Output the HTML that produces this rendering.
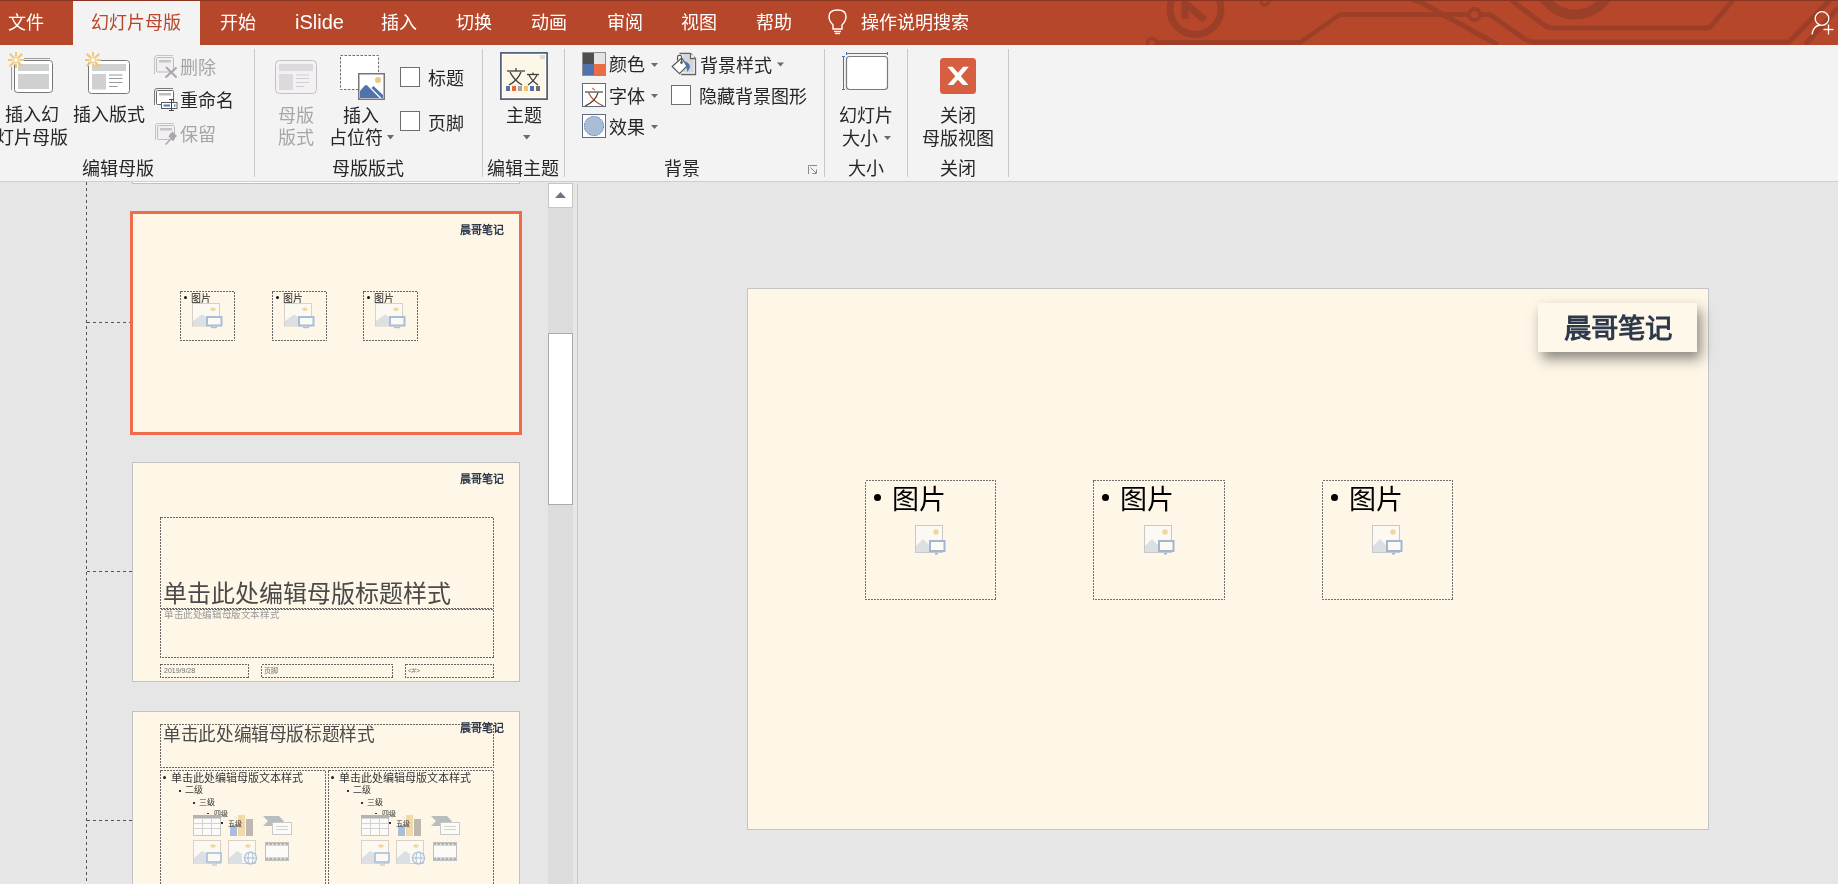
<!DOCTYPE html>
<html lang="zh-CN">
<head>
<meta charset="utf-8">
<style>
*{margin:0;padding:0;box-sizing:border-box}
html,body{width:1838px;height:884px;overflow:hidden}
body{position:relative;background:#E6E6E6;font-family:"Liberation Sans",sans-serif;color:#262626}
.a{position:absolute}
.t{position:absolute;white-space:nowrap;line-height:1;font-size:18px;will-change:transform}
.w{color:#fff}
.dis{color:#A6A6A6}
svg{position:absolute;overflow:visible}
</style>
</head>
<body>
<!-- TAB BAR -->
<div class="a" style="left:0;top:0;width:1838px;height:45px;background:#B7472A"></div>
<div class="a" style="left:0;top:0;width:1838px;height:1px;background:#8A3521"></div>
<svg style="left:0;top:0" width="1838" height="45" viewBox="0 0 1838 45">
 <defs><clipPath id="tb"><rect x="0" y="1" width="1838" height="44"/></clipPath></defs>
 <g clip-path="url(#tb)" fill="none" stroke="#9B3F28">
  <circle cx="1195.5" cy="9" r="25.5" stroke-width="7"/>
  <path d="M1185,19 L1185,0 M1185,3 L1205,20" stroke-width="7"/>
  <circle cx="1265" cy="1" r="4" stroke-width="3.5"/>
  <circle cx="1152" cy="43" r="4.5" stroke-width="3.5"/>
  <path d="M1157,42.5 L1300,42.5 L1340,14.5 L1468,14.5" stroke-width="4.5"/>
  <circle cx="1474.5" cy="14.5" r="5.5" stroke-width="4"/>
  <path d="M1481,14.5 L1488,14.5 Q1490,14.5 1492,16 L1526,40 Q1529,42 1533,42 L1789,42 L1830,0" stroke-width="5"/>
  <path d="M1412,0 Q1418,0 1424,4 L1498,45" stroke-width="5"/>
  <path d="M1511,0 L1544,25 Q1548,28 1553,28 L1706,28 Q1710,28 1713,24 L1733,0" stroke-width="5"/>
  <circle cx="1575" cy="-23" r="37.5" stroke-width="10"/>
  <path d="M1805,45 L1838,8" stroke-width="5"/>
 </g>
 <!-- bulb -->
 <g fill="none" stroke="#fff" stroke-width="1.4">
  <path d="M833,29 L833,25 Q829,21 829,16.5 Q829,10 837.5,10 Q846,10 846,16.5 Q846,21 842,25 L842,29 Z"/>
  <line x1="834" y1="31.5" x2="841" y2="31.5"/>
  <line x1="835" y1="33.5" x2="840" y2="33.5"/>
 </g>
 <!-- user add -->
 <g fill="none" stroke="#fff" stroke-width="1.3">
  <circle cx="1822" cy="18.5" r="6.8"/>
  <path d="M1812,34.5 Q1813,26 1820,25"/>
  <line x1="1823.5" y1="29.5" x2="1833.5" y2="29.5"/>
  <line x1="1828.5" y1="24.5" x2="1828.5" y2="34.5"/>
 </g>
</svg>
<div class="a" style="left:73px;top:1px;width:127px;height:44px;background:#F3F3F3"></div>

<div class="t w" style="left:8px;top:14px">文件</div>
<div class="t" style="left:91px;top:14px;color:#B7472A">幻灯片母版</div>
<div class="t w" style="left:220px;top:14px">开始</div>
<div class="t w" style="left:295px;top:12px;font-size:20px">iSlide</div>
<div class="t w" style="left:381px;top:14px">插入</div>
<div class="t w" style="left:456px;top:14px">切换</div>
<div class="t w" style="left:531px;top:14px">动画</div>
<div class="t w" style="left:607px;top:14px">审阅</div>
<div class="t w" style="left:681px;top:14px">视图</div>
<div class="t w" style="left:756px;top:14px">帮助</div>
<div class="t w" style="left:861px;top:14px">操作说明搜索</div>

<!-- RIBBON -->
<div class="a" style="left:0;top:45px;width:1838px;height:136px;background:#F3F3F3"></div>
<div class="a" style="left:0;top:181px;width:1838px;height:1px;background:#CDCFD1"></div>

<!-- ribbon icons -->
<svg style="left:0;top:0" width="1838" height="184" viewBox="0 0 1838 184">
 <!-- insert slide master -->
 <line x1="11.5" y1="67" x2="11.5" y2="90" stroke="#9C9C9C"/>
 <line x1="24" y1="58.5" x2="50" y2="58.5" stroke="#9C9C9C"/>
 <rect x="14.5" y="60.5" width="38" height="32" rx="3" fill="#fff" stroke="#767676"/>
 <rect x="18" y="64" width="31" height="7" fill="#CFD0D0"/>
 <rect x="18" y="74" width="31" height="15" fill="#CFD0D0"/>
 <g id="sun1">
  <circle cx="16" cy="60" r="5" fill="#F3F3F3"/>
  <g stroke="#F0C878" stroke-width="2" stroke-linecap="butt">
   <line x1="16" y1="52" x2="16" y2="56.5"/><line x1="16" y1="63.5" x2="16" y2="68"/>
   <line x1="8" y1="60" x2="12.5" y2="60"/><line x1="19.5" y1="60" x2="24" y2="60"/>
   <line x1="9.7" y1="53.7" x2="14" y2="58"/><line x1="18" y1="62" x2="22.3" y2="66.3"/>
   <line x1="22.3" y1="53.7" x2="18" y2="58"/><line x1="14" y1="62" x2="9.7" y2="66.3"/>
  </g>
  <circle cx="16" cy="60" r="2.4" fill="#fff" stroke="#F0C878" stroke-width="1"/>
 </g>
 <!-- insert layout -->
 <rect x="88.5" y="60.5" width="41" height="33" rx="3" fill="#fff" stroke="#767676"/>
 <rect x="92" y="64" width="34" height="7" fill="#CFD0D0"/>
 <rect x="92" y="74" width="14" height="15.5" fill="#CFD0D0"/>
 <g stroke="#9A9A9A"><line x1="109" y1="75" x2="122.5" y2="75"/><line x1="109" y1="78.5" x2="122.5" y2="78.5"/><line x1="109" y1="82.5" x2="122.5" y2="82.5"/><line x1="109" y1="86.5" x2="117.5" y2="86.5"/></g>
 <use href="#sun1" x="77" y="0"/>
 <!-- delete (disabled) -->
 <g>
  <path d="M154.5,74 L154.5,58 Q154.5,55.5 157,55.5 L173,55.5" fill="none" stroke="#C4C4C4"/>
  <rect x="156.5" y="57.5" width="17" height="14.5" rx="1" fill="#F3EEF3" stroke="#BDBDBD"/>
  <rect x="159" y="60" width="12" height="2.5" fill="#C6C6C6"/>
  <g stroke="#A8A8A8" stroke-width="2"><line x1="165.5" y1="77.5" x2="176.5" y2="67.5"/><line x1="166" y1="67" x2="176.5" y2="77.5"/></g>
 </g>
 <!-- rename -->
 <g>
  <path d="M154.5,105 L154.5,91 Q154.5,88.5 157,88.5 L173,88.5" fill="none" stroke="#7A7A7A"/>
  <rect x="156.5" y="90.5" width="17" height="14" rx="1" fill="#fff" stroke="#6A6A6A"/>
  <rect x="159" y="93" width="12" height="2.5" fill="#BDBDBD"/>
  <rect x="161.5" y="102.5" width="15.5" height="6" fill="#fff" stroke="#5A5A5A"/>
  <line x1="163.5" y1="105.5" x2="170" y2="105.5" stroke="#4A78BA" stroke-width="2"/>
  <rect x="174" y="104.5" width="1.5" height="2" fill="#4A78BA"/>
  <g stroke="#444"><line x1="171.5" y1="99.5" x2="171.5" y2="111"/><line x1="169" y1="99.5" x2="174" y2="99.5"/><line x1="169" y1="110.5" x2="174" y2="110.5"/></g>
 </g>
 <!-- preserve (disabled) -->
 <g>
  <path d="M155.5,140 L155.5,126 Q155.5,123.5 158,123.5 L174,123.5" fill="none" stroke="#C4C4C4"/>
  <rect x="157.5" y="125.5" width="17" height="14" rx="1" fill="#F3EEF3" stroke="#BDBDBD"/>
  <rect x="160" y="128" width="12" height="2.5" fill="#C6C6C6"/>
  <polygon points="168.5,136.5 173.5,141.5 174.5,138.5 177,136 172.5,131.5 170,134" fill="#A8A8A8"/>
  <line x1="165.5" y1="144.5" x2="170.5" y2="139.5" stroke="#A8A8A8" stroke-width="1.5"/>
 </g>
 <!-- master layout (disabled) -->
 <rect x="275.5" y="60.5" width="41" height="33" rx="4" fill="#F4F0F4" stroke="#C2C2C2"/>
 <rect x="279" y="64" width="34" height="7" fill="#DCDADC"/>
 <rect x="279" y="74" width="14" height="16" fill="#DCDADC"/>
 <g stroke="#CFCFCF"><line x1="296" y1="75" x2="309" y2="75"/><line x1="296" y1="78.5" x2="309" y2="78.5"/><line x1="296" y1="82.5" x2="309" y2="82.5"/><line x1="296" y1="86.5" x2="304" y2="86.5"/></g>
 <!-- insert placeholder -->
 <rect x="340.5" y="55.5" width="38" height="34" fill="#fff" stroke="#707070" stroke-dasharray="2.5 1.5"/>
 <rect x="358.75" y="73.75" width="25.5" height="25.5" fill="#fff" stroke="#777" stroke-width="1.5"/>
 <circle cx="378" cy="80" r="3" fill="#F0C57F"/>
 <polygon points="360,98 360,91 365,85.3 367,85.3 379.5,98" fill="#4F73AC"/>
 <polygon points="371.5,88 373.5,86 383,95 383,98 381.5,98" fill="#4F73AC"/>
 <polygon points="387,135 394,135 390.5,139.5" fill="#6A6A6A"/>
 <!-- checkboxes -->
 <rect x="400.5" y="67.5" width="19" height="19" fill="#fff" stroke="#6E6E6E"/>
 <rect x="400.5" y="111.5" width="19" height="19" fill="#fff" stroke="#6E6E6E"/>
 <rect x="671.5" y="85.5" width="19" height="19" fill="#fff" stroke="#6E6E6E"/>
 <!-- theme -->
 <rect x="500.9" y="52.9" width="46.2" height="46.2" fill="#fff" stroke="#56647A" stroke-width="1.8"/>
 <rect x="503" y="55" width="42" height="42" fill="#FDF7E8"/>
 <rect x="540" y="55" width="5" height="4" fill="#D9D9D9"/>
 <g fill="none" stroke="#404040" stroke-width="1.3">
  <line x1="507" y1="71" x2="525" y2="71"/><line x1="516" y1="68" x2="516" y2="71"/>
  <path d="M510,72 Q514,80 522,85"/><path d="M521,72 Q518,80 509,85"/>
  <line x1="527" y1="74.5" x2="539" y2="74.5"/><line x1="533" y1="72.5" x2="533" y2="74.5"/>
  <path d="M529,75 Q532,81 538,85"/><path d="M537,75 Q534,81 528,85"/>
 </g>
 <g><rect x="506" y="86" width="4" height="5" fill="#4E72B0"/><rect x="512" y="86" width="4" height="5" fill="#E8673E"/><rect x="518" y="86" width="4" height="5" fill="#A5A5A5"/><rect x="524" y="86" width="4" height="5" fill="#F0C46E"/><rect x="530" y="86" width="4" height="5" fill="#4E72B0"/><rect x="536" y="86" width="4" height="5" fill="#6E6E6E"/></g>
 <polygon points="523,135 530.5,135 526.75,139.5" fill="#6A6A6A"/>
 <!-- colors -->
 <rect x="583" y="53" width="11" height="11" fill="#4F4F4F"/>
 <rect x="594" y="53" width="11" height="11" fill="#E3E3E3"/>
 <rect x="583" y="64" width="11" height="11" fill="#4F73B0"/>
 <rect x="594" y="64" width="11" height="11" fill="#EB6D45"/>
 <rect x="582.5" y="52.5" width="23" height="23" fill="none" stroke="#8E8E8E"/>
 <!-- fonts -->
 <rect x="582.5" y="83.5" width="23" height="23" fill="#fff" stroke="#5F6B7C"/>
 <g fill="none" stroke-width="1.1">
  <line x1="585" y1="92" x2="603" y2="92" stroke="#333"/>
  <line x1="592.3" y1="88" x2="594.8" y2="90.2" stroke="#C8603E"/>
  <path d="M588.5,92.5 Q592,101 603.5,106" stroke="#A8502F"/>
  <path d="M598,92.5 Q596,101 585,106" stroke="#5A3A2A"/>
 </g>
 <!-- effects -->
 <rect x="582.5" y="114.5" width="23" height="23" fill="#fff" stroke="#5F6B7C"/>
 <circle cx="594" cy="126" r="9.6" fill="#A8BCD6" stroke="#5E82BE" stroke-dasharray="2 0.6"/>
 <!-- dropdown arrows -->
 <g fill="#6A6A6A">
  <polygon points="651,63 658,63 654.5,67"/>
  <polygon points="651,94 658,94 654.5,98"/>
  <polygon points="651,125 658,125 654.5,129"/>
  <polygon points="777,62.5 784,62.5 780.5,66.5"/>
  <polygon points="884,136 891,136 887.5,140"/>
 </g>
 <!-- background styles -->
 <path d="M679.5,53.5 L690.5,53.5 L695.5,58.5 L695.5,74.5 L681,74.5" fill="#fff" stroke="#646464" stroke-width="1.3"/>
 <rect x="683" y="55" width="10.8" height="17.6" fill="#D3D6DA"/>
 <path d="M690.5,53.5 L690.5,58.5 L695.5,58.5" fill="#fff" stroke="#646464" stroke-width="1.3"/>
 <path d="M672.2,66.5 L681.6,58 L687,66 L679.5,73.6 Z" fill="#fff" stroke="#5A5A5A" stroke-width="1.2"/>
 <path d="M677.5,60.5 L677.5,57 Q677.5,55.3 679.3,55.3 L680.2,55.3 Q681.6,55.3 681.6,57 L681.6,62" fill="none" stroke="#5A5A5A" stroke-width="1.2"/>
 <circle cx="681.5" cy="62.6" r="1.4" fill="#5A5A5A"/>
 <path d="M684.3,61 L687.5,62.5 L689.8,65 L689.8,68 L687.3,72 L686.3,66 Z" fill="#4A74B6"/>
 <!-- launcher -->
 <g fill="none" stroke="#8A8A8A"><path d="M808.5,174 L808.5,165.5 L817,165.5"/><line x1="810.5" y1="167.5" x2="816" y2="173"/><path d="M812.5,173.5 L816.5,173.5 L816.5,169.5"/></g>
 <!-- slide size -->
 <rect x="846.5" y="56.5" width="41" height="33" rx="3" fill="#fff" stroke="#7A7A7A" stroke-width="1.2"/>
 <g stroke="#4A74B6"><line x1="846" y1="53.5" x2="888" y2="53.5"/><line x1="846.5" y1="52" x2="846.5" y2="55"/><line x1="887.5" y1="52" x2="887.5" y2="55"/>
 <line x1="843.5" y1="56" x2="843.5" y2="90"/><line x1="842" y1="56.5" x2="845" y2="56.5"/><line x1="842" y1="89.5" x2="845" y2="89.5"/></g>
 <!-- close -->
 <rect x="940" y="58" width="36" height="36" rx="3.5" fill="#D55F40"/>
 <polygon points="947.4,66.8 952.6,66.8 957.9,72.7 963.2,66.8 968.8,66.8 960.9,76.2 968.5,85 962.9,85 957.9,79.8 953.2,85 947.6,85 955.3,76.2" fill="#fff"/>
</svg>

<!-- group labels -->
<div class="t" style="left:82px;top:160px">编辑母版</div>
<div class="t" style="left:332px;top:160px">母版版式</div>
<div class="t" style="left:487px;top:160px">编辑主题</div>
<div class="t" style="left:664px;top:160px">背景</div>
<div class="t" style="left:848px;top:160px">大小</div>
<div class="t" style="left:940px;top:160px">关闭</div>

<!-- separators -->
<div class="a" style="left:254px;top:49px;width:1px;height:128px;background:#C8C8C8"></div>
<div class="a" style="left:482px;top:49px;width:1px;height:128px;background:#C8C8C8"></div>
<div class="a" style="left:564px;top:49px;width:1px;height:128px;background:#C8C8C8"></div>
<div class="a" style="left:824px;top:49px;width:1px;height:128px;background:#C8C8C8"></div>
<div class="a" style="left:907px;top:49px;width:1px;height:128px;background:#C8C8C8"></div>
<div class="a" style="left:1008px;top:49px;width:1px;height:128px;background:#C8C8C8"></div>

<!-- group 1 texts -->
<div class="t" style="left:5px;top:106px">插入幻</div>
<div class="t" style="left:-4px;top:129px">灯片母版</div>
<div class="t" style="left:73px;top:106px">插入版式</div>
<div class="t dis" style="left:180px;top:59px">删除</div>
<div class="t" style="left:180px;top:92px">重命名</div>
<div class="t dis" style="left:180px;top:126px">保留</div>

<!-- group 2 texts -->
<div class="t dis" style="left:278px;top:107px">母版</div>
<div class="t dis" style="left:278px;top:129px">版式</div>
<div class="t" style="left:343px;top:107px">插入</div>
<div class="t" style="left:329px;top:129px">占位符</div>
<div class="t" style="left:428px;top:70px">标题</div>
<div class="t" style="left:428px;top:115px">页脚</div>

<!-- group 3 -->
<div class="t" style="left:506px;top:107px">主题</div>

<!-- group 4 -->
<div class="t" style="left:609px;top:56px">颜色</div>
<div class="t" style="left:609px;top:88px">字体</div>
<div class="t" style="left:609px;top:119px">效果</div>
<div class="t" style="left:700px;top:57px">背景样式</div>
<div class="t" style="left:699px;top:88px">隐藏背景图形</div>

<!-- group 5/6 -->
<div class="t" style="left:839px;top:107px">幻灯片</div>
<div class="t" style="left:842px;top:130px">大小</div>
<div class="t" style="left:940px;top:107px">关闭</div>
<div class="t" style="left:922px;top:130px">母版视图</div>

<!-- LEFT PANE -->
<div class="a" style="left:577px;top:184px;width:1px;height:700px;background:#C6C8CA"></div>
<!-- scrollbar -->
<div class="a" style="left:548px;top:207px;width:25px;height:677px;background:#DCDCDC"></div>
<div class="a" style="left:548px;top:183px;width:25px;height:25px;background:#fff;border:1px solid #C6C6C6"></div>
<svg style="left:555px;top:192px" width="11" height="6"><polygon points="0,6 5.5,0 11,6" fill="#6D7683"/></svg>
<div class="a" style="left:548px;top:333px;width:25px;height:172px;background:#fff;border:1px solid #ABABAB"></div>

<!-- connectors -->
<svg style="left:0;top:0" width="600" height="884" shape-rendering="crispEdges">
  <g stroke="#555" stroke-width="1" stroke-dasharray="3 3" fill="none">
    <line x1="86.5" y1="182" x2="86.5" y2="884"/>
    <line x1="87" y1="322.5" x2="130" y2="322.5"/>
    <line x1="87" y1="571.5" x2="132" y2="571.5"/>
    <line x1="87" y1="820.5" x2="132" y2="820.5"/>
  </g>
</svg>

<!-- thumb 0 (bottom edge) -->
<div class="a" style="left:132px;top:182px;width:388px;height:2px;background:#fff;border:1px solid #BFBFBF;border-top:0"></div>

<!-- thumb 1 selected -->
<div class="a" id="th1" style="left:130px;top:211px;width:392px;height:224px;background:#FEF7E8;border:3px solid #EE6C4A"></div>

<div class="t" style="left:460px;top:225px;font-size:11px;font-weight:bold;color:#2E3A4B">晨哥笔记</div>
<svg style="left:0;top:0" width="600" height="884" shape-rendering="crispEdges">
<g fill="none" stroke="#666" stroke-dasharray="2 1">
<rect x="180.5" y="291.5" width="54" height="49"/>
<rect x="272.5" y="291.5" width="54" height="49"/>
<rect x="363.5" y="291.5" width="54" height="49"/>
</g></svg>
<svg style="left:192px;top:303px" width="31" height="26" viewBox="0 0 31 26">
<rect x="0.5" y="0.5" width="27" height="22.5" fill="#FCF9F3" stroke="#D8D1C5"/>
<polygon points="1,23 1,18 10,11.5 14,14 14,23" fill="#DCE0E2"/>
<ellipse cx="21" cy="6.3" rx="2.8" ry="1.8" fill="#F1D6A2"/>
<rect x="15" y="14" width="14.5" height="8.5" fill="#FDF9F3" stroke="#A7BEDB" stroke-width="2"/>
<rect x="19" y="24" width="6" height="1.2" fill="#A7BEDB"/>
</svg>
<div class="a" style="left:184px;top:296px;width:3px;height:3px;border-radius:50%;background:#111"></div>
<div class="t" style="left:191px;top:294px;font-size:10px;color:#222">图片</div>
<svg style="left:284px;top:303px" width="31" height="26" viewBox="0 0 31 26">
<rect x="0.5" y="0.5" width="27" height="22.5" fill="#FCF9F3" stroke="#D8D1C5"/>
<polygon points="1,23 1,18 10,11.5 14,14 14,23" fill="#DCE0E2"/>
<ellipse cx="21" cy="6.3" rx="2.8" ry="1.8" fill="#F1D6A2"/>
<rect x="15" y="14" width="14.5" height="8.5" fill="#FDF9F3" stroke="#A7BEDB" stroke-width="2"/>
<rect x="19" y="24" width="6" height="1.2" fill="#A7BEDB"/>
</svg>
<div class="a" style="left:276px;top:296px;width:3px;height:3px;border-radius:50%;background:#111"></div>
<div class="t" style="left:283px;top:294px;font-size:10px;color:#222">图片</div>
<svg style="left:375px;top:303px" width="31" height="26" viewBox="0 0 31 26">
<rect x="0.5" y="0.5" width="27" height="22.5" fill="#FCF9F3" stroke="#D8D1C5"/>
<polygon points="1,23 1,18 10,11.5 14,14 14,23" fill="#DCE0E2"/>
<ellipse cx="21" cy="6.3" rx="2.8" ry="1.8" fill="#F1D6A2"/>
<rect x="15" y="14" width="14.5" height="8.5" fill="#FDF9F3" stroke="#A7BEDB" stroke-width="2"/>
<rect x="19" y="24" width="6" height="1.2" fill="#A7BEDB"/>
</svg>
<div class="a" style="left:367px;top:296px;width:3px;height:3px;border-radius:50%;background:#111"></div>
<div class="t" style="left:374px;top:294px;font-size:10px;color:#222">图片</div>

<!-- thumb 2 -->
<div class="a" id="th2" style="left:132px;top:462px;width:388px;height:220px;background:#FEF7E8;border:1px solid #C2C2C2"></div>

<div class="t" style="left:460px;top:474px;font-size:11px;font-weight:bold;color:#2E3A4B">晨哥笔记</div>
<svg style="left:0;top:0" width="600" height="884" shape-rendering="crispEdges">
<g fill="none" stroke="#666" stroke-dasharray="2 1">
<rect x="160.5" y="517.5" width="333" height="91"/>
<rect x="160.5" y="609.5" width="333" height="48"/>
<rect x="160.5" y="664.5" width="88" height="13"/>
<rect x="261.5" y="664.5" width="131" height="13"/>
<rect x="405.5" y="664.5" width="88" height="13"/>
</g></svg>
<div class="t" style="left:163px;top:582px;font-size:24px;color:#4A4A4A">单击此处编辑母版标题样式</div>
<div class="t" style="left:164px;top:610px;font-size:9.5px;letter-spacing:-0.4px;color:#9A9A9A">单击此处编辑母版文本样式</div>
<div class="t" style="left:164px;top:667px;font-size:7px;color:#707070">2019/9/28</div>
<div class="t" style="left:264px;top:667px;font-size:7px;color:#707070">页脚</div>
<div class="t" style="left:408px;top:667px;font-size:7px;color:#707070">&lt;#&gt;</div>

<!-- thumb 3 -->
<div class="a" id="th3" style="left:132px;top:711px;width:388px;height:220px;background:#FEF7E8;border:1px solid #C2C2C2"></div>
<svg style="left:0;top:0" width="600" height="884" shape-rendering="crispEdges">
<g fill="none" stroke="#666" stroke-dasharray="2 1">
<rect x="160.5" y="724.5" width="333" height="43"/>
<rect x="160.5" y="770.5" width="165" height="130"/>
<rect x="328.5" y="770.5" width="165" height="130"/>
</g></svg>
<div class="t" style="left:163px;top:727px;font-size:17.7px;letter-spacing:-0.36px;color:#4A4A4A">单击此处编辑母版标题样式</div>
<div class="t" style="left:460px;top:723px;font-size:11px;font-weight:bold;color:#2E3A4B">晨哥笔记</div>
<div class="a" style="left:163px;top:776px;width:3px;height:3px;border-radius:50%;background:#222"></div>
<div class="t" style="left:171px;top:773px;font-size:11px;color:#333">单击此处编辑母版文本样式</div>
<div class="a" style="left:179px;top:790px;width:2px;height:2px;background:#333"></div>
<div class="t" style="left:185px;top:786px;font-size:9px;color:#333">二级</div>
<div class="a" style="left:193px;top:802px;width:2px;height:2px;background:#333"></div>
<div class="t" style="left:199px;top:799px;font-size:8px;color:#333">三级</div>
<div class="a" style="left:207px;top:812.5px;width:1.5px;height:1.5px;background:#333"></div>
<div class="t" style="left:214px;top:810px;font-size:7px;color:#333">四级</div>
<div class="a" style="left:221px;top:822px;width:1.5px;height:1.5px;background:#333"></div>
<svg style="left:193px;top:815px" width="100" height="52" viewBox="0 0 100 52">
<rect x="0.5" y="0.5" width="27" height="20" fill="#FDFBF7" stroke="#C9C9C9"/>
<rect x="0" y="0" width="28" height="3.5" fill="#B3B3B3"/>
<g stroke="#D3D3D3" stroke-width="1"><line x1="1" y1="8.5" x2="27" y2="8.5"/><line x1="1" y1="13.5" x2="27" y2="13.5"/><line x1="9.5" y1="3" x2="9.5" y2="20"/><line x1="18.5" y1="3" x2="18.5" y2="20"/></g>
<rect x="37" y="10" width="7" height="11" fill="#A8BEDB"/>
<rect x="45" y="0" width="7" height="21" fill="#F2DAA8"/>
<rect x="53" y="4" width="7" height="17" fill="#BDB9B2"/>
<polygon points="70,1 86,1 91,6 86,11 70,11 75,6" fill="#B9BDBE"/>
<rect x="79.5" y="7.5" width="19" height="12" fill="#FDFBF7" stroke="#C9C9C9"/>
<g stroke="#D3D3D3"><line x1="83" y1="11.5" x2="95" y2="11.5"/><line x1="83" y1="14.5" x2="95" y2="14.5"/></g>
<rect x="0.5" y="25.5" width="27" height="23" fill="#FCF9F3" stroke="#D8D1C5"/>
<polygon points="1,49 1,43 9,36 14,39 14,49" fill="#DCE0E2"/>
<ellipse cx="20" cy="31" rx="2.8" ry="1.8" fill="#F1D6A2"/>
<rect x="14" y="38" width="14" height="9" fill="#FDF9F3" stroke="#A7BEDB" stroke-width="1.6"/>
<rect x="19" y="49.5" width="5" height="1" fill="#A7BEDB"/>
<rect x="35.5" y="25.5" width="27" height="23" fill="#FCF9F3" stroke="#D8D1C5"/>
<polygon points="36,49 36,43 44,36 49,39 49,49" fill="#DCE0E2"/>
<ellipse cx="55" cy="31" rx="2.8" ry="1.8" fill="#F1D6A2"/>
<circle cx="57.5" cy="43" r="6" fill="#FDF9F3" stroke="#A7BEDB" stroke-width="1.2"/>
<ellipse cx="57.5" cy="43" rx="2.5" ry="6" fill="none" stroke="#A7BEDB" stroke-width="1"/>
<line x1="51.5" y1="43" x2="63.5" y2="43" stroke="#A7BEDB" stroke-width="1"/>
<rect x="72.5" y="27.5" width="23" height="18" fill="#FDFBF7" stroke="#C0C0C0"/>
<g fill="#B0B0B0"><rect x="73" y="28" width="22" height="2.5"/><rect x="73" y="42.5" width="22" height="2.5"/></g>
<g fill="#FDFBF7"><rect x="75" y="28.7" width="1.5" height="1.2"/><rect x="79" y="28.7" width="1.5" height="1.2"/><rect x="83" y="28.7" width="1.5" height="1.2"/><rect x="87" y="28.7" width="1.5" height="1.2"/><rect x="91" y="28.7" width="1.5" height="1.2"/>
<rect x="75" y="43.2" width="1.5" height="1.2"/><rect x="79" y="43.2" width="1.5" height="1.2"/><rect x="83" y="43.2" width="1.5" height="1.2"/><rect x="87" y="43.2" width="1.5" height="1.2"/><rect x="91" y="43.2" width="1.5" height="1.2"/></g>
</svg>
<div class="t" style="left:228px;top:820px;font-size:7px;color:#333">五级</div>
<div class="a" style="left:331px;top:776px;width:3px;height:3px;border-radius:50%;background:#222"></div>
<div class="t" style="left:339px;top:773px;font-size:11px;color:#333">单击此处编辑母版文本样式</div>
<div class="a" style="left:347px;top:790px;width:2px;height:2px;background:#333"></div>
<div class="t" style="left:353px;top:786px;font-size:9px;color:#333">二级</div>
<div class="a" style="left:361px;top:802px;width:2px;height:2px;background:#333"></div>
<div class="t" style="left:367px;top:799px;font-size:8px;color:#333">三级</div>
<div class="a" style="left:375px;top:812.5px;width:1.5px;height:1.5px;background:#333"></div>
<div class="t" style="left:382px;top:810px;font-size:7px;color:#333">四级</div>
<div class="a" style="left:389px;top:822px;width:1.5px;height:1.5px;background:#333"></div>
<svg style="left:361px;top:815px" width="100" height="52" viewBox="0 0 100 52">
<rect x="0.5" y="0.5" width="27" height="20" fill="#FDFBF7" stroke="#C9C9C9"/>
<rect x="0" y="0" width="28" height="3.5" fill="#B3B3B3"/>
<g stroke="#D3D3D3" stroke-width="1"><line x1="1" y1="8.5" x2="27" y2="8.5"/><line x1="1" y1="13.5" x2="27" y2="13.5"/><line x1="9.5" y1="3" x2="9.5" y2="20"/><line x1="18.5" y1="3" x2="18.5" y2="20"/></g>
<rect x="37" y="10" width="7" height="11" fill="#A8BEDB"/>
<rect x="45" y="0" width="7" height="21" fill="#F2DAA8"/>
<rect x="53" y="4" width="7" height="17" fill="#BDB9B2"/>
<polygon points="70,1 86,1 91,6 86,11 70,11 75,6" fill="#B9BDBE"/>
<rect x="79.5" y="7.5" width="19" height="12" fill="#FDFBF7" stroke="#C9C9C9"/>
<g stroke="#D3D3D3"><line x1="83" y1="11.5" x2="95" y2="11.5"/><line x1="83" y1="14.5" x2="95" y2="14.5"/></g>
<rect x="0.5" y="25.5" width="27" height="23" fill="#FCF9F3" stroke="#D8D1C5"/>
<polygon points="1,49 1,43 9,36 14,39 14,49" fill="#DCE0E2"/>
<ellipse cx="20" cy="31" rx="2.8" ry="1.8" fill="#F1D6A2"/>
<rect x="14" y="38" width="14" height="9" fill="#FDF9F3" stroke="#A7BEDB" stroke-width="1.6"/>
<rect x="19" y="49.5" width="5" height="1" fill="#A7BEDB"/>
<rect x="35.5" y="25.5" width="27" height="23" fill="#FCF9F3" stroke="#D8D1C5"/>
<polygon points="36,49 36,43 44,36 49,39 49,49" fill="#DCE0E2"/>
<ellipse cx="55" cy="31" rx="2.8" ry="1.8" fill="#F1D6A2"/>
<circle cx="57.5" cy="43" r="6" fill="#FDF9F3" stroke="#A7BEDB" stroke-width="1.2"/>
<ellipse cx="57.5" cy="43" rx="2.5" ry="6" fill="none" stroke="#A7BEDB" stroke-width="1"/>
<line x1="51.5" y1="43" x2="63.5" y2="43" stroke="#A7BEDB" stroke-width="1"/>
<rect x="72.5" y="27.5" width="23" height="18" fill="#FDFBF7" stroke="#C0C0C0"/>
<g fill="#B0B0B0"><rect x="73" y="28" width="22" height="2.5"/><rect x="73" y="42.5" width="22" height="2.5"/></g>
<g fill="#FDFBF7"><rect x="75" y="28.7" width="1.5" height="1.2"/><rect x="79" y="28.7" width="1.5" height="1.2"/><rect x="83" y="28.7" width="1.5" height="1.2"/><rect x="87" y="28.7" width="1.5" height="1.2"/><rect x="91" y="28.7" width="1.5" height="1.2"/>
<rect x="75" y="43.2" width="1.5" height="1.2"/><rect x="79" y="43.2" width="1.5" height="1.2"/><rect x="83" y="43.2" width="1.5" height="1.2"/><rect x="87" y="43.2" width="1.5" height="1.2"/><rect x="91" y="43.2" width="1.5" height="1.2"/></g>
</svg>
<div class="t" style="left:396px;top:820px;font-size:7px;color:#333">五级</div>

<!-- MAIN SLIDE -->
<div class="a" style="left:747px;top:288px;width:962px;height:542px;background:#FEF7E8;border:1px solid #C4C4C4"></div>
<div class="a" style="left:1538px;top:303px;width:159px;height:49px;background:#FEF8EA;box-shadow:4px 7px 12px rgba(30,28,25,0.5)"></div>
<div class="t" style="left:1564px;top:315px;font-size:27.5px;font-weight:bold;color:#2E3A4B">晨哥笔记</div>

<svg style="left:0;top:0" width="1838" height="884" shape-rendering="crispEdges">
  <g fill="none" stroke="#707070" stroke-width="1" stroke-dasharray="2 1">
    <rect x="865.5" y="480.5" width="130" height="119"/>
    <rect x="1093.5" y="480.5" width="131" height="119"/>
    <rect x="1322.5" y="480.5" width="130" height="119"/>
  </g>
</svg>
<div class="a" style="left:874px;top:494px;width:7px;height:7px;border-radius:50%;background:#000"></div>
<div class="a" style="left:1102px;top:494px;width:7px;height:7px;border-radius:50%;background:#000"></div>
<div class="a" style="left:1331px;top:494px;width:7px;height:7px;border-radius:50%;background:#000"></div>
<svg style="left:915px;top:525px" width="32" height="31" viewBox="0 0 32 31">
<rect x="0.5" y="0.5" width="27" height="27" fill="#FCF9F3" stroke="#C8C8C8"/>
<polygon points="1,27 1,21 8,14 14,20 14,27" fill="#DCE0E2"/>
<circle cx="21" cy="7" r="2.8" fill="#F1D6A2"/>
<rect x="15" y="16" width="14.5" height="10" fill="#FDF9F3" stroke="#A2B6D4" stroke-width="2"/>
<rect x="20" y="28" width="3" height="1.5" fill="#A2B6D4"/>
</svg>
<svg style="left:1144px;top:525px" width="32" height="31" viewBox="0 0 32 31">
<rect x="0.5" y="0.5" width="27" height="27" fill="#FCF9F3" stroke="#C8C8C8"/>
<polygon points="1,27 1,21 8,14 14,20 14,27" fill="#DCE0E2"/>
<circle cx="21" cy="7" r="2.8" fill="#F1D6A2"/>
<rect x="15" y="16" width="14.5" height="10" fill="#FDF9F3" stroke="#A2B6D4" stroke-width="2"/>
<rect x="20" y="28" width="3" height="1.5" fill="#A2B6D4"/>
</svg>
<svg style="left:1372px;top:525px" width="32" height="31" viewBox="0 0 32 31">
<rect x="0.5" y="0.5" width="27" height="27" fill="#FCF9F3" stroke="#C8C8C8"/>
<polygon points="1,27 1,21 8,14 14,20 14,27" fill="#DCE0E2"/>
<circle cx="21" cy="7" r="2.8" fill="#F1D6A2"/>
<rect x="15" y="16" width="14.5" height="10" fill="#FDF9F3" stroke="#A2B6D4" stroke-width="2"/>
<rect x="20" y="28" width="3" height="1.5" fill="#A2B6D4"/>
</svg>
<div class="t" style="left:892px;top:487px;font-size:27px;color:#000">图片</div>
<div class="t" style="left:1120px;top:487px;font-size:27px;color:#000">图片</div>
<div class="t" style="left:1349px;top:487px;font-size:27px;color:#000">图片</div>

</body>
</html>
